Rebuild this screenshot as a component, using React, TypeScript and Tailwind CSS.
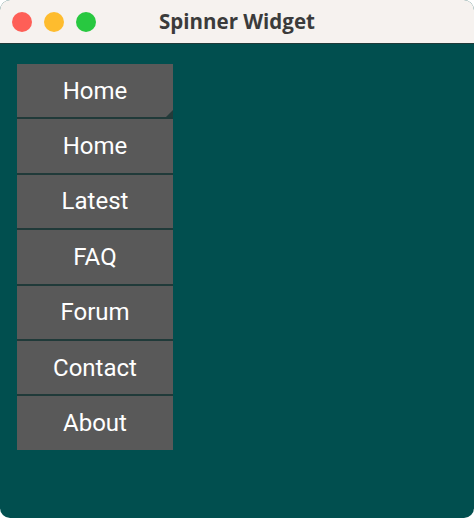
const items = ['Home', 'Home', 'Latest', 'FAQ', 'Forum', 'Contact', 'About'];

export default function App() {
  return (
    <div className="w-[474px] h-[518px] bg-white">
      <div className="w-full h-full flex flex-col rounded-[10px] overflow-hidden bg-[#014f4f]">
        <div className="relative h-[44px] shrink-0 bg-[#f6f2ef] border-b border-[#1f3b3a] flex items-center">
          <div className="flex items-center gap-[12px] pl-[12px]">
            <span className="w-[20px] h-[20px] rounded-full bg-[#fe5f57]" />
            <span className="w-[20px] h-[20px] rounded-full bg-[#febc2e]" />
            <span className="w-[20px] h-[20px] rounded-full bg-[#28c840]" />
          </div>
          <div
            className="absolute inset-0 flex items-center justify-center text-[20.5px] font-bold text-[#3b3b3b]"
            style={{ fontFamily: '"Open Sans", sans-serif' }}
          >
            Spinner Widget
          </div>
        </div>
        <div className="flex-1 pt-[20px] pl-[17px]">
          <div className="flex flex-col gap-[2px] w-[156px] bg-[#203a39]">
            {items.map((label, i) => (
              <div
                key={i}
                className="relative h-[53.4px] bg-[#595959] flex items-center justify-center text-white text-[24px]"
                style={{ fontFamily: 'Roboto, sans-serif' }}
              >
                {label}
                {i === 0 && (
                  <span className="absolute right-0 bottom-0 w-0 h-0 border-l-[7px] border-l-transparent border-b-[7px] border-b-[#243b3a]" />
                )}
              </div>
            ))}
          </div>
        </div>
      </div>
    </div>
  );
}
